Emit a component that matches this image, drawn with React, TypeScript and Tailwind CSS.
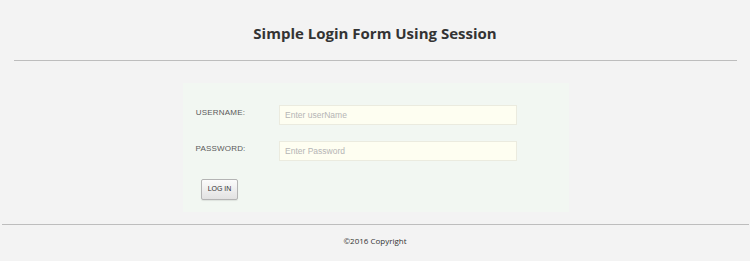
export default function App() {
  return (
    <div className="min-h-[261px] w-full bg-[#f3f3f3] font-['Liberation_Sans',Arial,sans-serif] text-[#333]">
      <header className="pt-[22px]">
        <h1 className="text-center font-['Open_Sans',sans-serif] text-[15px] font-bold leading-[22px] text-[#333]">
          Simple Login Form Using Session
        </h1>
        <div className="ml-[14px] mr-[13px] mt-[16px] border-t border-[#bdbdbd]" />
      </header>

      <main className="mt-[22px] flex justify-center">
        <form className="ml-[2px] h-[129px] w-[386px] bg-[#f2f7f2] pt-[22px]">
          <div className="flex items-center">
            <label className="w-[75px] -translate-y-[2px] text-center text-[8px] tracking-[0.2px] text-[#5a5a5a]">
              USERNAME:
            </label>
            <input
              type="text"
              placeholder="Enter userName"
              className="ml-[21px] h-[20px] w-[238px] border border-[#ebebdf] bg-[#fefef1] px-[5px] text-[8.5px] outline-none placeholder:text-[#b5b5b5]"
            />
          </div>
          <div className="mt-[16px] flex items-center">
            <label className="w-[75px] -translate-y-[2px] text-center text-[8px] tracking-[0.2px] text-[#5a5a5a]">
              PASSWORD:
            </label>
            <input
              type="password"
              placeholder="Enter Password"
              className="ml-[21px] h-[20px] w-[238px] border border-[#ebebdf] bg-[#fefef1] px-[5px] text-[8.5px] outline-none placeholder:text-[#b5b5b5]"
            />
          </div>
          <button
            type="button"
            className="ml-[18px] mt-[18px] h-[21px] w-[37px] rounded-[2px] border border-[#b4b4b4] bg-gradient-to-b from-[#fbfbfb] to-[#e2e2e2] text-[7px] text-[#333] shadow-[0_1px_1px_rgba(0,0,0,0.08)]"
          >
            LOG IN
          </button>
        </form>
      </main>

      <footer className="mt-[12px]">
        <div className="ml-[2px] mr-[1px] border-t border-[#bdbdbd]" />
        <p className="pt-[10px] text-center font-['Open_Sans',sans-serif] text-[8px] leading-[12px] text-[#333]">
          ©2016 Copyright
        </p>
      </footer>
    </div>
  );
}
